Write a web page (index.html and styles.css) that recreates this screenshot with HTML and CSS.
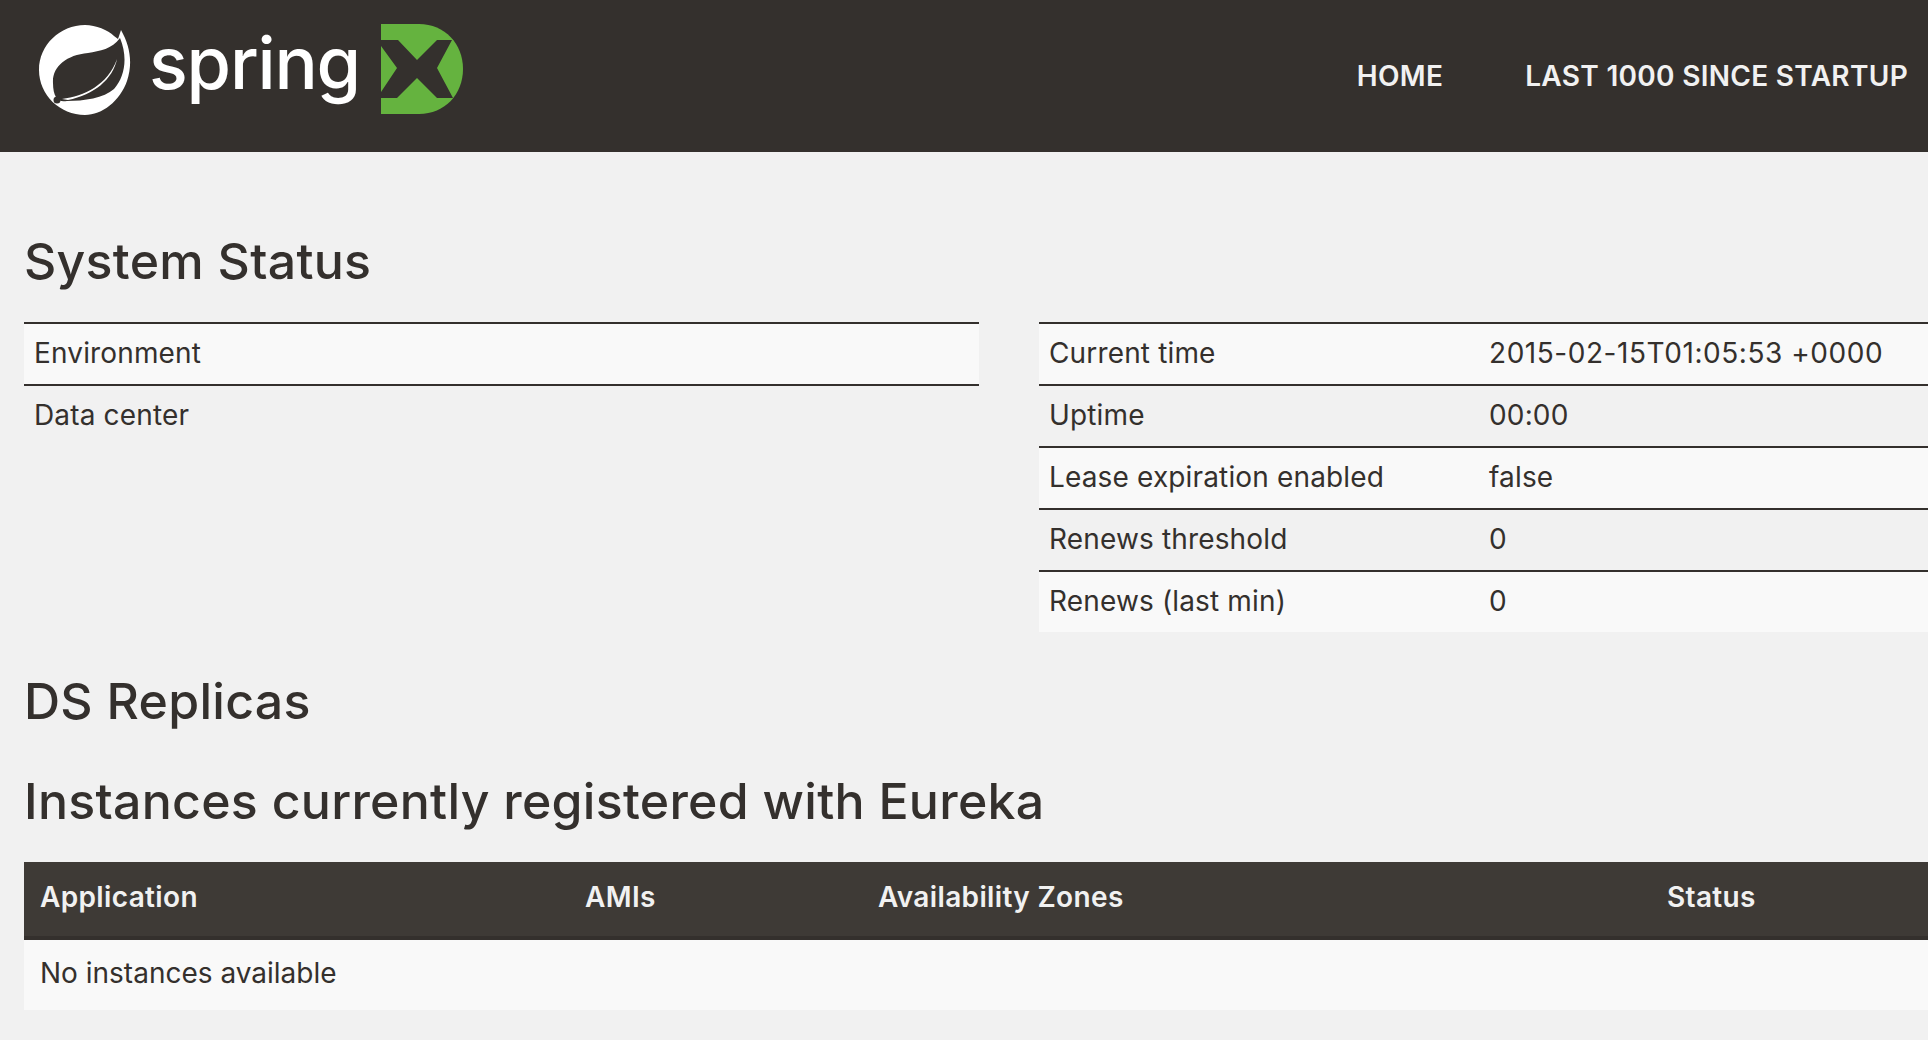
FILE: index.html
```html
<!DOCTYPE html>
<html lang="en">
<head>
<meta charset="utf-8">
<title>Eureka</title>
<link rel="stylesheet" href="styles.css">
</head>
<body>
<header class="nav">
  <a class="brand" href="#">
    <svg class="leaf" width="94" height="92" viewBox="38 23 94 92">
      <path class="white" fill-rule="evenodd" d="M85 24C96 24 108 29 114 35L118 38L121 29C130 45 133 62 127 80C120 100 102 114 85 114C60 114 39 94 39 69C39 44 60 24 85 24ZM120 37C112 48 100 50 88 52C66 54 52 66 53 82C53 88 54 93 56 96C58 100 62 101 67 100C84 100 104 97 114 88C125 76 128 56 120 37Z"/>
      <path class="white" d="M62 98C84 95 108 84 117 58C113 78 94 94 68 99Z"/>
      <circle class="dark" cx="57" cy="99" r="3.5"/>
    </svg>
    <span class="word">spring</span>
    <svg class="x" width="82" height="90" viewBox="0 0 82 90">
      <path class="green" d="M0 0H38C64 0 82 20 82 45C82 70 64 90 38 90H0Z"/>
      <path class="dark" d="M0 16H17L36 36L56 16H71L56 44L72 74H56L36 54L16 74H0V68L16 44L0 22Z"/>
    </svg>
  </a>
  <nav class="links">
    <a href="#">HOME</a>
    <a href="#">LAST 1000 SINCE STARTUP</a>
  </nav>
</header>
<main class="content">
  <h1 class="status-title">System Status</h1>
  <div class="status">
    <table class="kv">
      <tr class="odd"><td>Environment</td></tr>
      <tr><td>Data center</td></tr>
    </table>
    <table class="kv kv-right">
      <tr class="odd"><td class="key">Current time</td><td class="time">2015-02-15T01:05:53 +0000</td></tr>
      <tr><td>Uptime</td><td>00:00</td></tr>
      <tr class="odd"><td>Lease expiration enabled</td><td>false</td></tr>
      <tr><td>Renews threshold</td><td>0</td></tr>
      <tr class="odd"><td>Renews (last min)</td><td>0</td></tr>
    </table>
  </div>
  <h1 class="replicas">DS Replicas</h1>
  <h1 class="instances">Instances currently registered with Eureka</h1>
  <table class="apps">
    <thead>
      <tr><th class="c1">Application</th><th class="c2">AMIs</th><th class="c3">Availability Zones</th><th>Status</th></tr>
    </thead>
    <tbody>
      <tr><td colspan="4">No instances available</td></tr>
    </tbody>
  </table>
</main>
</body>
</html>
```
FILE: styles.css
```css
* { box-sizing: border-box; }
html, body { margin: 0; height: 100%; overflow: hidden; }
body { background: #f1f1f1; color: #34302d; font-family: "Inter", "Noto Sans", sans-serif; }
a { color: inherit; text-decoration: none; }
.nav { height: 152px; background: #34302d; display: flex; justify-content: space-between; padding: 24px 20px 0 38px; }
.brand { display: flex; align-items: flex-start; color: #fff; }
.white { fill: #fff; }
.dark { fill: #34302d; }
.green { fill: #65b33f; }
.leaf { display: block; }
.word { font-family: "Inter", sans-serif; font-weight: 500; font-size: 72px; line-height: 68px; margin: 5px 21px 0 17px; letter-spacing: -1.2px; }
.x { display: block; }
.links { display: flex; gap: 82px; padding-top: 35px; color: #f1f1f1; font-family: "Inter", sans-serif; font-weight: 600; font-size: 28px; line-height: 34px; letter-spacing: .3px; }
.content { padding: 0 0 0 24px; }
h1 { font-family: "Inter", sans-serif; font-weight: 500; margin: 0; font-size: 50px; line-height: 60px; color: #34302d; letter-spacing: .28px; }
.status-title { padding-top: 79px; }
.status { display: flex; gap: 60px; margin-top: 31px; }
.kv { border-collapse: collapse; font-size: 28px; align-self: flex-start; flex: none; width: 955px; letter-spacing: .15px; }
.kv-right { width: 900px; }
.kv td { height: 62px; padding: 0 10px 3px; border-top: 2px solid #34302d; }
.kv .odd td { background: #f9f9f9; }
.kv .key { width: 440px; }
.kv .time { letter-spacing: .55px; }
.kv-right tr:last-child td { height: 61px; }
.replicas { margin-top: 39px; }
.instances { margin-top: 40px; }
.apps { border-collapse: collapse; width: 1904px; margin-top: 31px; }
.apps th { height: 76px; background: #3e3a36; color: #f1f1f1; text-align: left; padding: 0 16px 4px; font-size: 28px; font-weight: 600; letter-spacing: .35px; border-bottom: 4px solid #34302d; }
.apps td { height: 72px; background: #f9f9f9; padding: 0 16px 4px; font-size: 28px; }
.c1 { width: 545px; }
.c2 { width: 293px; }
.c3 { width: 789px; }
```
